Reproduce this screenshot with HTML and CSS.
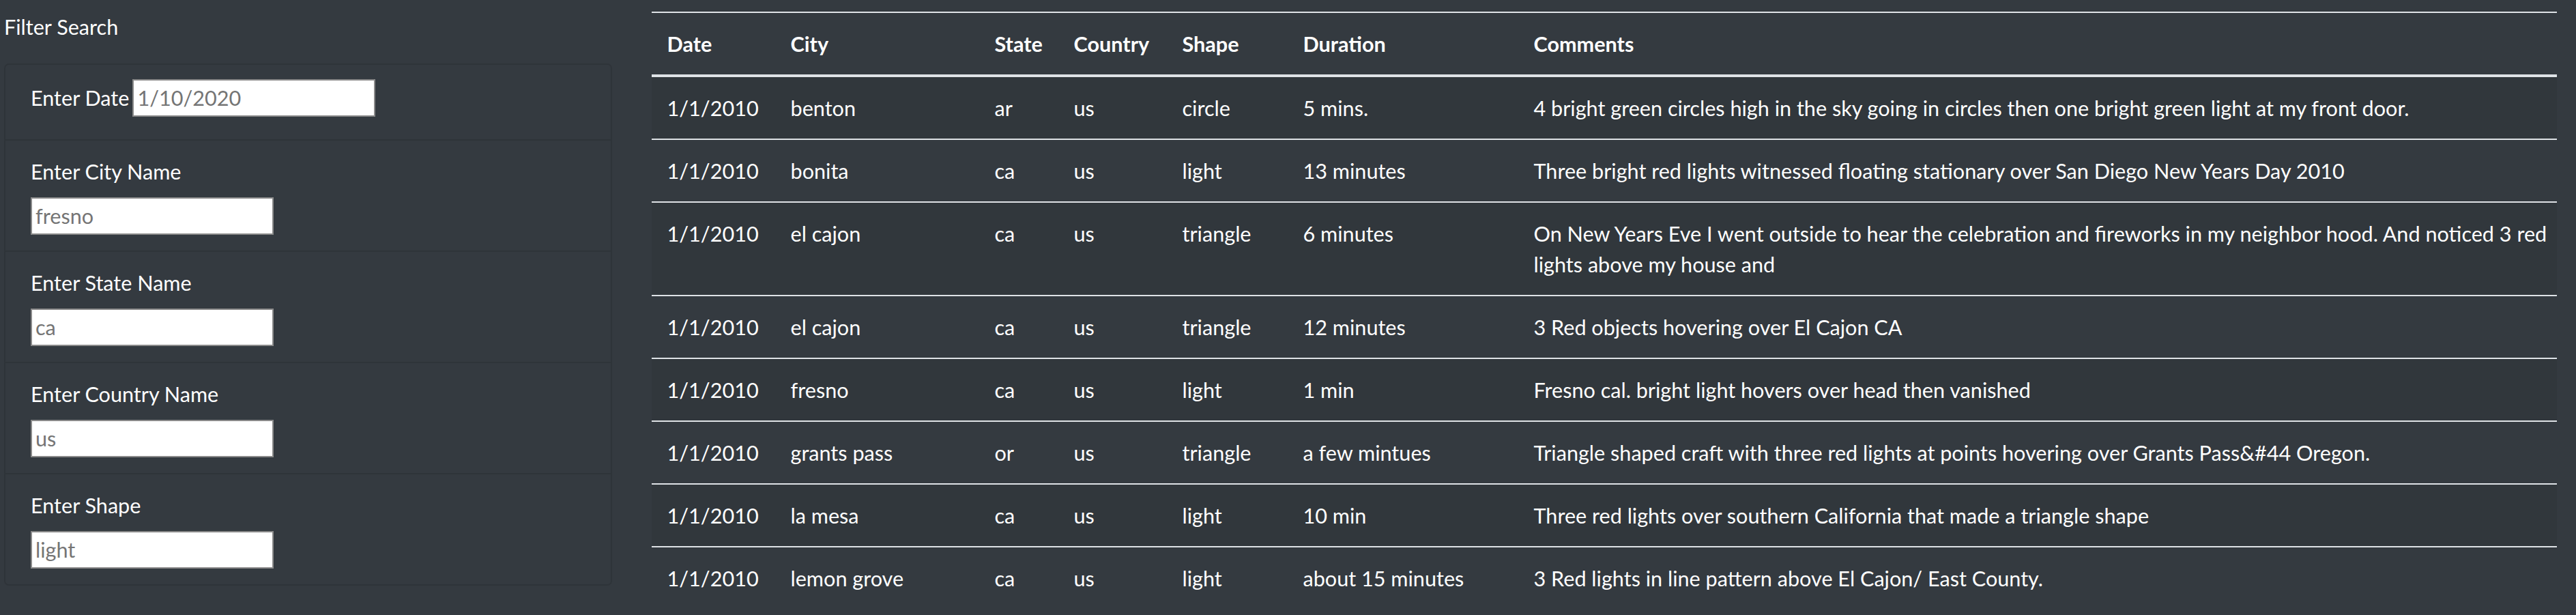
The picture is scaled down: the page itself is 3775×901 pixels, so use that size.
FILE: index.html
```html
<!DOCTYPE html>
<html lang="en">
<head>
<meta charset="utf-8">
<title>UFO Sightings</title>
<link rel="stylesheet" href="styles.css">
</head>
<body>
<div class="page">
  <aside class="sidebar">
    <div class="title">Filter Search</div>
    <ul class="filters">
      <li class="filter filter-inline">
        <label for="datetime">Enter Date</label>
        <input id="datetime" type="text" placeholder="1/10/2020">
      </li>
      <li class="filter">
        <label for="city">Enter City Name</label>
        <input id="city" type="text" placeholder="fresno">
      </li>
      <li class="filter">
        <label for="state">Enter State Name</label>
        <input id="state" type="text" placeholder="ca">
      </li>
      <li class="filter">
        <label for="country">Enter Country Name</label>
        <input id="country" type="text" placeholder="us">
      </li>
      <li class="filter">
        <label for="shape">Enter Shape</label>
        <input id="shape" type="text" placeholder="light">
      </li>
    </ul>
  </aside>
  <main class="results">
    <table class="ufo-table">
      <colgroup>
        <col class="c-date"><col class="c-city"><col class="c-state"><col class="c-country"><col class="c-shape"><col class="c-duration"><col class="c-comments">
      </colgroup>
      <thead>
        <tr><th>Date</th><th>City</th><th>State</th><th>Country</th><th>Shape</th><th>Duration</th><th>Comments</th></tr>
      </thead>
      <tbody>
        <tr><td>1/1/2010</td><td>benton</td><td>ar</td><td>us</td><td>circle</td><td>5 mins.</td><td>4 bright green circles high in the sky going in circles then one bright green light at my front door.</td></tr>
        <tr><td>1/1/2010</td><td>bonita</td><td>ca</td><td>us</td><td>light</td><td>13 minutes</td><td>Three bright red lights witnessed floating stationary over San Diego New Years Day 2010</td></tr>
        <tr><td>1/1/2010</td><td>el cajon</td><td>ca</td><td>us</td><td>triangle</td><td>6 minutes</td><td>On New Years Eve I went outside to hear the celebration and fireworks in my neighbor hood. And noticed 3 red lights above my house and</td></tr>
        <tr><td>1/1/2010</td><td>el cajon</td><td>ca</td><td>us</td><td>triangle</td><td>12 minutes</td><td>3 Red objects hovering over El Cajon CA</td></tr>
        <tr><td>1/1/2010</td><td>fresno</td><td>ca</td><td>us</td><td>light</td><td>1 min</td><td>Fresno cal. bright light hovers over head then vanished</td></tr>
        <tr><td>1/1/2010</td><td>grants pass</td><td>or</td><td>us</td><td>triangle</td><td>a few mintues</td><td>Triangle shaped craft with three red lights at points hovering over Grants Pass&amp;#44 Oregon.</td></tr>
        <tr><td>1/1/2010</td><td>la mesa</td><td>ca</td><td>us</td><td>light</td><td>10 min</td><td>Three red lights over southern California that made a triangle shape</td></tr>
        <tr><td>1/1/2010</td><td>lemon grove</td><td>ca</td><td>us</td><td>light</td><td>about 15 minutes</td><td>3 Red lights in line pattern above El Cajon/ East County.</td></tr>
      </tbody>
    </table>
  </main>
</div>
</body>
</html>
```

FILE: styles.css
```css
html, body {
  margin: 0;
  padding: 0;
  background: #343a40;
}

body {
  font-family: Lato, "Noto Sans", "Liberation Sans", sans-serif;
  font-size: 30.6px;
  line-height: 45px;
  color: #ffffff;
}

.page {
  display: flex;
  align-items: flex-start;
  padding: 17px 28px 0 6px;
}

.sidebar {
  width: 891px;
  flex: none;
}

.title {
  height: 45px;
  line-height: 45px;
  margin-bottom: 31px;
}

.filters {
  list-style: none;
  margin: 0;
  padding: 0;
  border: 2px solid rgba(0, 0, 0, 0.1);
  border-radius: 7px;
}

.filter {
  padding: 23px 37px 23px;
  border-top: 2px solid rgba(0, 0, 0, 0.1);
}

.filter:first-child {
  border-top: 0;
}

.filter label {
  display: block;
  line-height: 45px;
  margin-bottom: 15px;
}

.filter-inline {
  display: flex;
  align-items: flex-start;
  gap: 5px;
  height: 64px;
  padding-top: 21px;
  padding-bottom: 24px;
}

.filter-inline label {
  line-height: 55px;
  margin-bottom: 0;
}

.filter input {
  display: block;
  box-sizing: border-box;
  width: 356px;
  height: 55px;
  margin: 0;
  padding: 0 5px;
  border: 2px solid #8a8a8a;
  border-radius: 0;
  background: #ffffff;
  font-family: inherit;
  font-size: 30.6px;
  color: #212529;
  outline: none;
}

.filter input::placeholder {
  color: #757575;
  opacity: 1;
}

.results {
  flex: 1;
  margin-left: 58px;
}

.ufo-table {
  width: 100%;
  table-layout: fixed;
  border-collapse: collapse;
}

.c-date { width: 181px; }
.c-city { width: 299px; }
.c-state { width: 116px; }
.c-country { width: 159px; }
.c-shape { width: 177px; }
.c-duration { width: 338px; }
.c-comments { width: auto; }

.ufo-table th,
.ufo-table td {
  padding: 22.5px;
  text-align: left;
  vertical-align: top;
  line-height: 45px;
  border-top: 2px solid #dee2e6;
}

.ufo-table td:last-child {
  padding-right: 0;
}

.ufo-table th {
  font-weight: 700;
  vertical-align: bottom;
  border-bottom: 4px solid #dee2e6;
}

.ufo-table tbody tr:nth-child(odd) {
  background: rgba(0, 0, 0, 0.05);
}
```
